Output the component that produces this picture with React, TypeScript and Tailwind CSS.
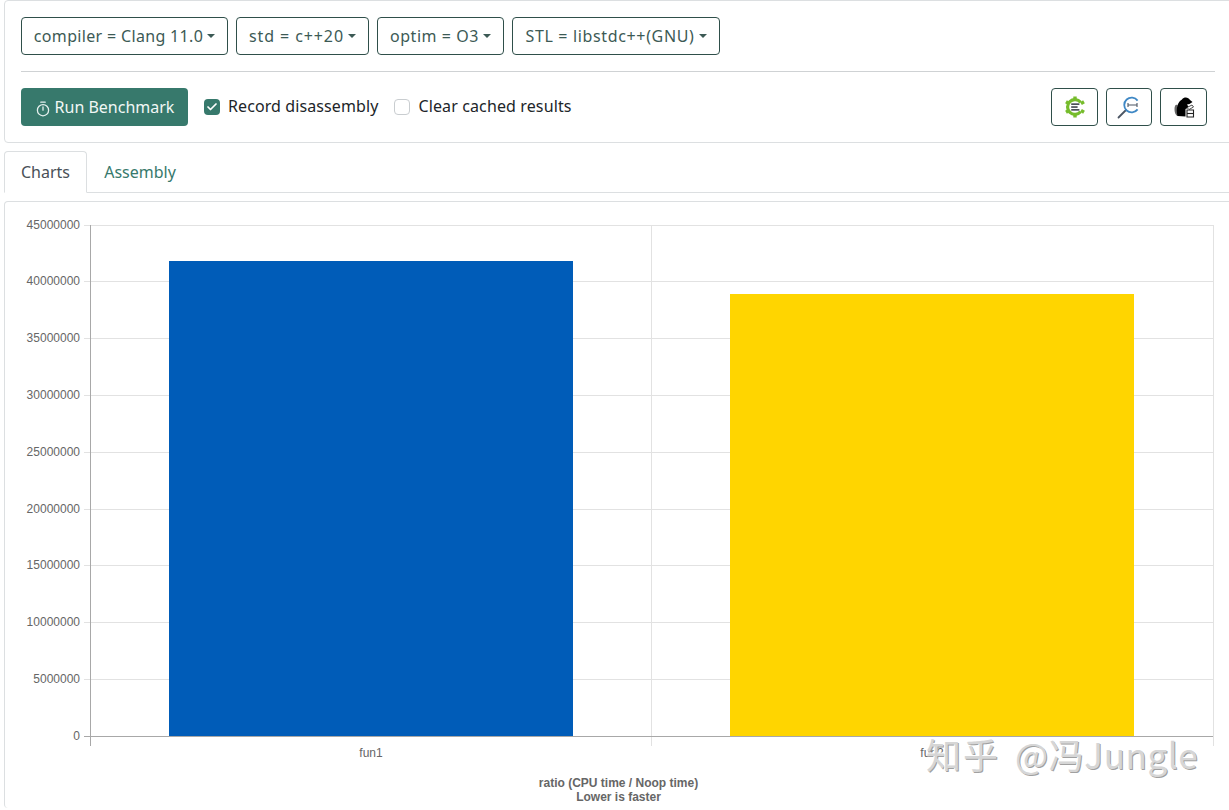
import { Check } from "lucide-react";

const fontStack = "font-['Noto_Sans','Open_Sans',sans-serif]";

const dropdowns = [
  { label: "compiler = Clang 11.0", width: "w-[207px]", spacing: "tracking-[0.33px]" },
  { label: "std = c++20", width: "w-[133px]", spacing: "tracking-[0.9px]" },
  { label: "optim = O3", width: "w-[127px]", spacing: "tracking-[0.55px]" },
  { label: "STL = libstdc++(GNU)", width: "w-[208px]", spacing: "tracking-[0.65px]" },
];

// y is the grid line's pixel row inside the chart card
const yTicks = [
  { value: 45000000, y: 23 },
  { value: 40000000, y: 79 },
  { value: 35000000, y: 136 },
  { value: 30000000, y: 193 },
  { value: 25000000, y: 250 },
  { value: 20000000, y: 307 },
  { value: 15000000, y: 363 },
  { value: 10000000, y: 420 },
  { value: 5000000, y: 477 },
  { value: 0, y: 534 },
];

const chart = { left: 85, right: 1208, top: 23, bottom: 534, mid: 646 };

function Dropdown({ label, width, spacing }: { label: string; width: string; spacing: string }) {
  return (
    <button className={`${width} h-[38px] flex items-center justify-center gap-[4px] rounded-[4px] border border-[#2f4f4a] text-[16px] text-[#3c5a55] bg-white whitespace-nowrap`}>
      <span className={spacing}>{label}</span>
      <span className="w-0 h-0 border-x-[4px] border-x-transparent border-t-[4px] border-t-[#3c5a55]" />
    </button>
  );
}

function GearIcon() {
  return (
    <svg width="22" height="22" viewBox="0 0 22 22">
      <g stroke="#76bc2c" strokeWidth="3.4" strokeLinecap="butt">
        <line x1="11" y1="0.5" x2="11" y2="4" />
        <line x1="11" y1="18" x2="11" y2="21.5" />
        <line x1="2" y1="5.8" x2="5" y2="7.6" />
        <line x1="2" y1="16.2" x2="5" y2="14.4" />
        <line x1="20" y1="5.8" x2="17" y2="7.6" />
        <line x1="20" y1="16.2" x2="17" y2="14.4" />
      </g>
      <path d="M16.6 6.2 A7.4 7.4 0 1 0 16.6 15.8" fill="none" stroke="#76bc2c" strokeWidth="3.2" />
      <g fill="#4b5057">
        <rect x="7.2" y="7.3" width="8.2" height="1.7" />
        <rect x="7.2" y="10.2" width="6.4" height="1.7" />
        <rect x="7.2" y="13" width="8.2" height="1.7" />
      </g>
    </svg>
  );
}

function SearchIcon() {
  return (
    <svg width="24" height="24" viewBox="0 0 24 24">
      <path d="M1.5 22.5 L9 15" stroke="#4b5563" strokeWidth="1.8" strokeLinecap="round" />
      <path d="M20.6 5.6 A7.4 7.4 0 1 0 20.6 14.4" fill="none" stroke="#3f88c5" strokeWidth="1.8" />
      <path d="M11 10 H20 M11 8 V12 M20 8 V12" stroke="#4b5563" strokeWidth="1.1" />
    </svg>
  );
}

function BeaverIcon() {
  return (
    <svg width="24" height="24" viewBox="0 0 24 24">
      <path d="M2.5 14 C2.5 10 4 9 5.5 10 L6 21 C4 21 2.5 18 2.5 14 Z" fill="#666" />
      <path d="M5.5 21 C3.5 13 6 6.5 10 4.5 C12 1.5 16.5 2 18 5 L20.5 7 L17.5 9 L15 9.5 L17 12.5 L13.5 14 L13.5 21.5 Z" fill="#000" />
      <path d="M15 15 H21.5 V22 H15 Z" fill="#fff" stroke="#222" strokeWidth="1.1" />
      <path d="M15 18.5 H21.5" stroke="#222" strokeWidth="1.1" />
      <path d="M15 12.5 L20 10 L21.5 12 L17 14.5 Z" fill="#fff" stroke="#222" strokeWidth="0.8" />
    </svg>
  );
}

function IconButton({ width, children }: { width: string; children: React.ReactNode }) {
  return (
    <button className={`${width} h-[38px] flex items-center justify-center rounded-[4px] border border-[#2f4f4a] bg-white`}>
      {children}
    </button>
  );
}

function StopwatchIcon() {
  return (
    <svg width="14" height="16" viewBox="0 0 14 16" fill="none" stroke="#e6f0ee" strokeWidth="1.3">
      <circle cx="7" cy="9.2" r="5.6" />
      <path d="M7 9.2 V6 M4.8 1.2 H9.2" strokeLinecap="round" />
    </svg>
  );
}

function BarChart() {
  return (
    <svg width="1225" height="606" className="block">
      <g stroke="#e2e2e2" strokeWidth="1">
        {yTicks.map((t) => (
          <line key={t.value} x1={chart.left - 6} x2={chart.right} y1={t.y + 0.5} y2={t.y + 0.5} />
        ))}
        <line x1={chart.mid + 0.5} x2={chart.mid + 0.5} y1={chart.top} y2={chart.bottom + 10} />
        <line x1={chart.right + 0.5} x2={chart.right + 0.5} y1={chart.top} y2={chart.bottom + 10} />
      </g>
      <rect x="164" y="59" width="404" height={chart.bottom - 59} fill="#005cb8" />
      <rect x="725" y="92" width="404" height={chart.bottom - 92} fill="#ffd500" />
      <line x1={chart.left + 0.5} x2={chart.left + 0.5} y1={chart.top} y2={chart.bottom + 10} stroke="#a8a8a8" />
      <line x1={chart.left - 6} x2={chart.right} y1={chart.bottom + 0.5} y2={chart.bottom + 0.5} stroke="#a8a8a8" />
      <g fontFamily="'Liberation Sans', Arial, sans-serif" fontSize="12" fill="#666">
        {yTicks.map((t) => (
          <text key={t.value} x={chart.left - 10} y={t.y + 4} textAnchor="end">
            {t.value}
          </text>
        ))}
        <text x="366" y="555" textAnchor="middle">fun1</text>
        <text x="927" y="555" textAnchor="middle">fun2</text>
        <text x="613.5" y="585" textAnchor="middle" fontWeight="700">ratio (CPU time / Noop time)</text>
        <text x="613.5" y="599" textAnchor="middle" fontWeight="700">Lower is faster</text>
      </g>
    </svg>
  );
}

export default function App() {
  return (
    <div className={`relative w-[1229px] h-[810px] overflow-hidden bg-white ${fontStack}`}>
      <div className="w-[1245px] px-[4px]">
        {/* Controls */}
        <div className="h-[143px] rounded-[4px] border border-[#dcdfe1] px-[16px] pt-[16px]">
          <div className="flex gap-[8px]">
            {dropdowns.map((d) => (
              <Dropdown key={d.label} label={d.label} width={d.width} spacing={d.spacing} />
            ))}
          </div>
          <div className="h-px bg-[#cfd2d4] mt-[16px] w-[1194px]" />
          <div className="flex items-center mt-[16px] w-[1186px]">
            <button className="w-[167px] h-[38px] flex items-center justify-center gap-[5px] rounded-[4px] bg-[#37796c] text-[16px] text-[#f1f7f5]">
              <span className="mt-[3px] ml-[1px]"><StopwatchIcon /></span>
              <span className="-mt-[1px]">Run Benchmark</span>
            </button>
            <label className="flex items-center gap-[8px] ml-[16px] text-[16px] tracking-[0.1px] text-[#212529]">
              <span className="w-[16px] h-[16px] rounded-[4px] bg-[#37796c] flex items-center justify-center">
                <Check size={12} strokeWidth={3.5} color="#fff" />
              </span>
              <span className="-mt-[2px]">Record disassembly</span>
            </label>
            <label className="flex items-center gap-[8px] ml-[16px] text-[16px] tracking-[0.12px] text-[#212529]">
              <span className="w-[16px] h-[16px] rounded-[4px] border border-[#c9cdd0] bg-white" />
              <span className="-mt-[2px]">Clear cached results</span>
            </label>
            <div className="ml-auto flex gap-[8px]">
              <IconButton width="w-[47px]"><GearIcon /></IconButton>
              <IconButton width="w-[46px]"><SearchIcon /></IconButton>
              <IconButton width="w-[47px]"><BeaverIcon /></IconButton>
            </div>
          </div>
        </div>

        {/* Tabs */}
        <div className="flex mt-[8px] h-[42px] border-b border-[#dcdfe1] text-[16px]">
          <div className="w-[83px] h-[42px] flex items-center justify-center rounded-t-[4px] border border-[#dcdfe1] border-b-white bg-white text-[#495057]">
            Charts
          </div>
          <div className="w-[107px] h-[41px] flex items-center justify-center text-[#37796c] pr-[1px]">
            Assembly
          </div>
        </div>

        {/* Chart card */}
        <div className="mt-[8px] rounded-[4px] border border-[#dcdfe1] border-b-0">
          <BarChart />
        </div>
      </div>

      {/* Watermark */}
      <div className="absolute left-[926px] top-[732px] flex items-center gap-[15px] text-[35px] leading-[44px] text-[#d6d6d6] font-['Noto_Sans_CJK_SC','Noto_Sans',sans-serif] [text-shadow:-1px_-1px_0_#fff,1px_1px_0_#a0a0a0] whitespace-nowrap">
        <span className="tracking-[2px]">知乎</span>
        <span className="tracking-[0.6px]">@冯Jungle</span>
      </div>
    </div>
  );
}
